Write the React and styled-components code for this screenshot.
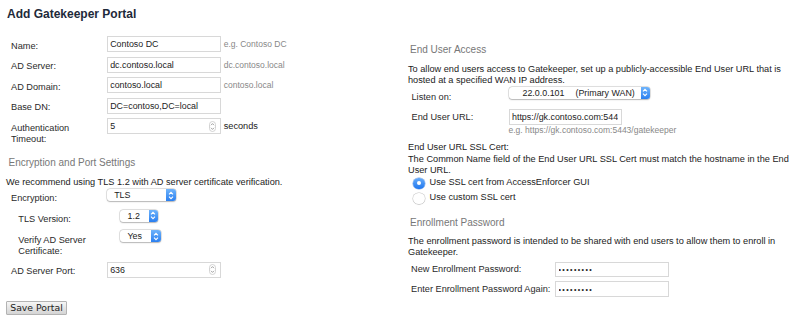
import React from "react";
import styled, { createGlobalStyle } from "styled-components";

const GlobalStyle = createGlobalStyle`
  body {
    margin: 0;
    background: #fff;
    font-family: "Liberation Sans", Arial, Helvetica, sans-serif;
    color: #222;
  }
`;

const Page = styled.div`
  padding-left: 6px;
`;

const Title = styled.h1`
  margin: 0;
  padding: 7px 0 0 1px;
  font-size: 12px;
  line-height: 14px;
  font-weight: bold;
  color: #1e2a3a;
`;

const Columns = styled.div`
  display: flex;
  align-items: flex-start;
`;

const LeftCol = styled.div`
  width: 401.5px;
  flex: none;
  padding-top: 15px;
`;

const RightCol = styled.div`
  flex: 1;
  padding-top: 23px;
`;

const SectionHeading = styled.div`
  margin-top: ${(p) => p.$mt || 0}px;
  padding-left: 2.5px;
  font-size: 10px;
  line-height: 12px;
  color: #777;
`;

const Para = styled.p`
  margin: ${(p) => p.$mt || 0}px 0 0;
  padding-left: ${(p) => p.$pl || 0}px;
  font-size: 9.2px;
  line-height: 11.5px;
  color: #222;
`;

const FormRow = styled.div`
  display: flex;
  align-items: flex-start;
  margin-top: ${(p) => p.$mt || 0}px;
  padding-left: ${(p) => p.$indent}px;
`;

const Label = styled.div`
  flex: none;
  width: ${(p) => p.$w}px;
  padding: ${(p) => p.$pt}px 0 ${(p) => p.$pb}px;
  font-size: 9.2px;
  line-height: 11px;
  color: #2a2a2a;
`;

const FieldStack = styled.div`
  display: flex;
  flex-direction: column;
`;

const FieldLine = styled.div`
  display: flex;
  align-items: center;
`;

const Input = styled.input`
  box-sizing: border-box;
  width: ${(p) => p.$w || 114}px;
  height: ${(p) => p.$h || 16}px;
  margin: 0;
  padding: 0 2.5px;
  border: 1px solid #d8d8d8;
  border-radius: 0;
  background: #fff;
  font-family: "Liberation Sans", Arial, sans-serif;
  font-size: ${(p) => (p.type === "password" ? 7 : 8.9)}px;
  letter-spacing: ${(p) => (p.type === "password" ? 1.4 : 0)}px;
  color: #222;
  outline: none;
`;

const NumberBox = styled.div`
  box-sizing: border-box;
  display: flex;
  align-items: center;
  width: 114px;
  height: 16px;
  padding: 0 4px 0 2.5px;
  border: 1px solid #d8d8d8;
  background: #fff;
`;

const NumberValue = styled.span`
  flex: 1;
  font-size: 8.9px;
  color: #222;
`;

const Hint = styled.span`
  margin-left: ${(p) => p.$ml || 0}px;
  line-height: ${(p) => p.$lh || 16}px;
  color: ${(p) => (p.$dark ? "#222" : "#888")};
  font-size: ${(p) => (p.$dark ? 9.2 : 8.5)}px;
`;

const SelectBox = styled.div`
  display: flex;
  align-items: stretch;
  box-sizing: border-box;
  width: ${(p) => p.$w}px;
  height: ${(p) => p.$h || 12}px;
  border-radius: 3px;
  background: #fff;
  box-shadow: 0 0 0 0.5px rgba(0, 0, 0, 0.18), 0 0.5px 1.5px rgba(0, 0, 0, 0.22);
  font-size: 8.9px;
  color: #222;
`;

const SelectText = styled.span`
  flex: 1;
  display: flex;
  align-items: center;
  gap: 11px;
  padding-left: ${(p) => p.$pl}px;
  white-space: nowrap;
  overflow: hidden;
`;

const SelectArrow = styled.span`
  flex: none;
  width: 9.5px;
  display: flex;
  align-items: center;
  justify-content: center;
  border-radius: 0 3px 3px 0;
  background: linear-gradient(#6fb4fb, #2a7ff0);
`;

const RadioRow = styled.label`
  display: flex;
  align-items: flex-start;
  height: 15px;
  padding-left: 5.5px;
  font-size: 9.2px;
  line-height: 11px;
  color: #222;
`;

const RadioDot = styled.span`
  flex: none;
  box-sizing: border-box;
  width: 11.5px;
  height: 11.5px;
  margin: 1px 5px 0 0;
  border-radius: 50%;
  display: flex;
  align-items: center;
  justify-content: center;
  background: ${(p) =>
    p.$on ? "linear-gradient(#67acf9, #1f77ef)" : "#fff"};
  box-shadow: ${(p) =>
    p.$on
      ? "0 0 0 0.5px rgba(20,90,200,0.5)"
      : "0 0 0 0.5px rgba(0,0,0,0.22), 0 0.5px 1px rgba(0,0,0,0.15)"};

  &::after {
    content: "";
    display: ${(p) => (p.$on ? "block" : "none")};
    width: 4px;
    height: 4px;
    border-radius: 50%;
    background: #fff;
  }
`;

const SaveButton = styled.button`
  display: block;
  box-sizing: border-box;
  width: 61px;
  height: 14px;
  margin-top: 18.4px;
  padding: 0;
  border: 1px solid #b3b3b3;
  border-radius: 1px;
  background: linear-gradient(#f6f6f6, #d4d4d4);
  font-family: "DejaVu Sans", Verdana, sans-serif;
  font-size: 9.3px;
  line-height: 12px;
  color: #222;
`;

const Chevrons = () => (
  <svg width="6" height="9" viewBox="0 0 6 9">
    <path d="M1 3.4 L3 1.4 L5 3.4" fill="none" stroke="#fff" strokeWidth="1.1" />
    <path d="M1 5.6 L3 7.6 L5 5.6" fill="none" stroke="#fff" strokeWidth="1.1" />
  </svg>
);

const Spinner = () => (
  <svg width="7" height="11" viewBox="0 0 7 11">
    <rect x="0.5" y="0.5" width="6" height="10" rx="3" fill="#fff" stroke="#c8c8c8" strokeWidth="0.8" />
    <path d="M2 4.2 L3.5 2.6 L5 4.2" fill="none" stroke="#8a8a8a" strokeWidth="0.8" />
    <path d="M2 6.8 L3.5 8.4 L5 6.8" fill="none" stroke="#8a8a8a" strokeWidth="0.8" />
  </svg>
);

const Select = ({ w, h, pl, children }) => (
  <SelectBox $w={w} $h={h}>
    <SelectText $pl={pl}>{children}</SelectText>
    <SelectArrow>
      <Chevrons />
    </SelectArrow>
  </SelectBox>
);

const LeftRow = ({ label, indent = 5, children }) => (
  <FormRow $indent={indent}>
    <Label $w={indent === 5 ? 95.7 : 101.8} $pt={4.5} $pb={5}>
      {label}
    </Label>
    {children}
  </FormRow>
);

export default function App() {
  return (
    <Page>
      <GlobalStyle />
      <Title>Add Gatekeeper Portal</Title>
      <Columns>
        <LeftCol>
          <LeftRow label="Name:">
            <FieldLine>
              <Input defaultValue="Contoso DC" />
              <Hint $ml={3}>e.g. Contoso DC</Hint>
            </FieldLine>
          </LeftRow>
          <LeftRow label="AD Server:">
            <FieldLine>
              <Input defaultValue="dc.contoso.local" />
              <Hint $ml={3}>dc.contoso.local</Hint>
            </FieldLine>
          </LeftRow>
          <LeftRow label="AD Domain:">
            <FieldLine>
              <Input defaultValue="contoso.local" />
              <Hint $ml={3}>contoso.local</Hint>
            </FieldLine>
          </LeftRow>
          <LeftRow label="Base DN:">
            <Input defaultValue="DC=contoso,DC=local" />
          </LeftRow>
          <LeftRow
            label={
              <>
                Authentication
                <br />
                Timeout:
              </>
            }
          >
            <FieldLine>
              <NumberBox>
                <NumberValue>5</NumberValue>
                <Spinner />
              </NumberBox>
              <Hint $ml={3} $dark>
                seconds
              </Hint>
            </FieldLine>
          </LeftRow>

          <SectionHeading $mt={7.8}>Encryption and Port Settings</SectionHeading>
          <Para $mt={7.7}>
            We recommend using TLS 1.2 with AD server certificate verification.
          </Para>
          <FormRow $indent={5} $mt={0.8}>
            <Label $w={95.7} $pt={4} $pb={5.5}>
              Encryption:
            </Label>
            <Select w={69} pl={7.5}>
              TLS
            </Select>
          </FormRow>
          <LeftRow label="TLS Version:" indent={12.3}>
            <Select w={38} pl={7.4}>
              1.2
            </Select>
          </LeftRow>
          <LeftRow
            label={
              <>
                Verify AD Server
                <br />
                Certificate:
              </>
            }
            indent={12.3}
          >
            <Select w={40.7} pl={7.4}>
              Yes
            </Select>
          </LeftRow>
          <LeftRow label="AD Server Port:">
            <NumberBox>
              <NumberValue>636</NumberValue>
              <Spinner />
            </NumberBox>
          </LeftRow>
          <SaveButton>Save Portal</SaveButton>
        </LeftCol>

        <RightCol>
          <SectionHeading>End User Access</SectionHeading>
          <Para $mt={7.5} $pl={0.5}>
            To allow end users access to Gatekeeper, set up a publicly-accessible
            End User URL that is hosted at a specified WAN IP address.
          </Para>
          <FormRow $indent={4}>
            <Label $w={97} $pt={5} $pb={5}>
              Listen on:
            </Label>
            <Select w={141.5} h={12.5} pl={14}>
              <span>22.0.0.101</span>
              <span>(Primary WAN)</span>
            </Select>
          </FormRow>
          <FormRow $indent={4} $mt={1.5}>
            <Label $w={97} $pt={2.8} $pb={2}>
              End User URL:
            </Label>
            <FieldStack>
              <Input $w={113} $h={15.5} defaultValue="https://gk.contoso.com:5443/gatekeeper" />
              <Hint $lh={11}>e.g. https://gk.contoso.com:5443/gatekeeper</Hint>
            </FieldStack>
          </FormRow>
          <Para $mt={6.7} $pl={0.5}>
            End User URL SSL Cert:
            <br />
            The Common Name field of the End User URL SSL Cert must match the
            hostname in the End User URL.
          </Para>
          <RadioRow>
            <RadioDot $on />
            Use SSL cert from AccessEnforcer GUI
          </RadioRow>
          <RadioRow>
            <RadioDot />
            Use custom SSL cert
          </RadioRow>
          <SectionHeading $mt={10}>Enrollment Password</SectionHeading>
          <Para $mt={7.3} $pl={0.5}>
            The enrollment password is intended to be shared with end users to
            allow them to enroll in Gatekeeper.
          </Para>
          <FormRow $indent={3.5} $mt={3}>
            <Label $w={144} $pt={2.5} $pb={6}>
              New Enrollment Password:
            </Label>
            <Input type="password" $h={15.5} defaultValue="123456789" />
          </FormRow>
          <FormRow $indent={3.5}>
            <Label $w={144} $pt={2.5} $pb={6}>
              Enter Enrollment Password Again:
            </Label>
            <Input type="password" $h={15.5} defaultValue="123456789" />
          </FormRow>
        </RightCol>
      </Columns>
    </Page>
  );
}
